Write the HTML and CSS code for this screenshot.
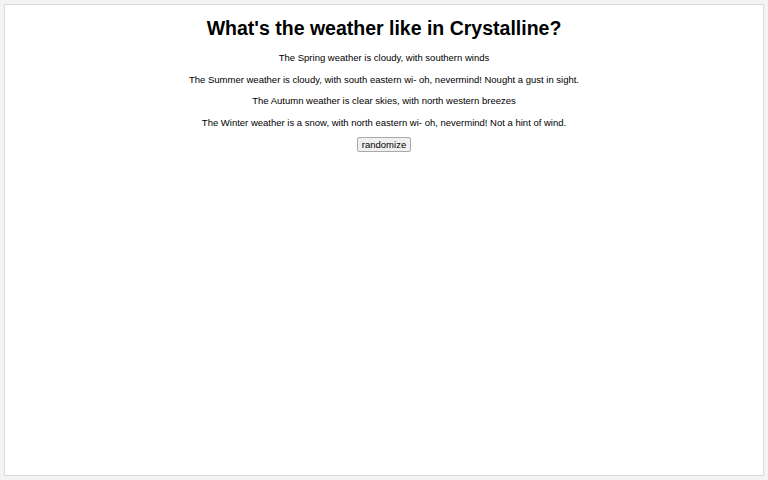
FILE: index.html
```html
<!DOCTYPE html>
<html lang="en">
<head>
    <meta charset="UTF-8">
    <meta name="viewport" content="width=device-width, initial-scale=1.0">
    <title>Crystalline Weather</title>
    <link rel="stylesheet" href="styles.css">
</head>
<body>
    <div class="container">
        <h1>What's the weather like in Crystalline?</h1>
        <div class="seasons">
            <p>The Spring weather is cloudy, with southern winds</p>
            <p>The Summer weather is cloudy, with south eastern wi- oh, nevermind! Nought a gust in sight.</p>
            <p>The Autumn weather is clear skies, with north western breezes</p>
            <p>The Winter weather is a snow, with north eastern wi- oh, nevermind! Not a hint of wind.</p>
        </div>
        <button id="randomize">randomize</button>
    </div>
</body>
</html>
```

FILE: styles.css
```css
html, body {
    height: 100%;
}
body {
    font-family: 'Liberation Sans', Arial, sans-serif;
    color: #000;
    background-color: #f3f3f3;
    margin: 0;
    padding: 4px;
    box-sizing: border-box;
}
.container {
    background-color: #fff;
    border: 1px solid #dcdcdc;
    height: 100%;
    box-sizing: border-box;
    text-align: center;
    padding-top: 12px;
}
h1 {
    font-size: 19.5px;
    margin: 0 0 12px;
}
.seasons {
    margin-bottom: 5px;
}
p {
    font-size: 9.5px;
    margin: 0 0 10px;
    line-height: 11.7px;
}
.seasons p:last-child {
    margin-bottom: 0;
}
button {
    font-family: 'Liberation Sans', Arial, sans-serif;
    font-size: 9.5px;
    padding: 1px 4px;
    background-color: #f0f0f0;
    border: 1px solid #aaa;
    border-radius: 2px;
    color: #000;
}
```
